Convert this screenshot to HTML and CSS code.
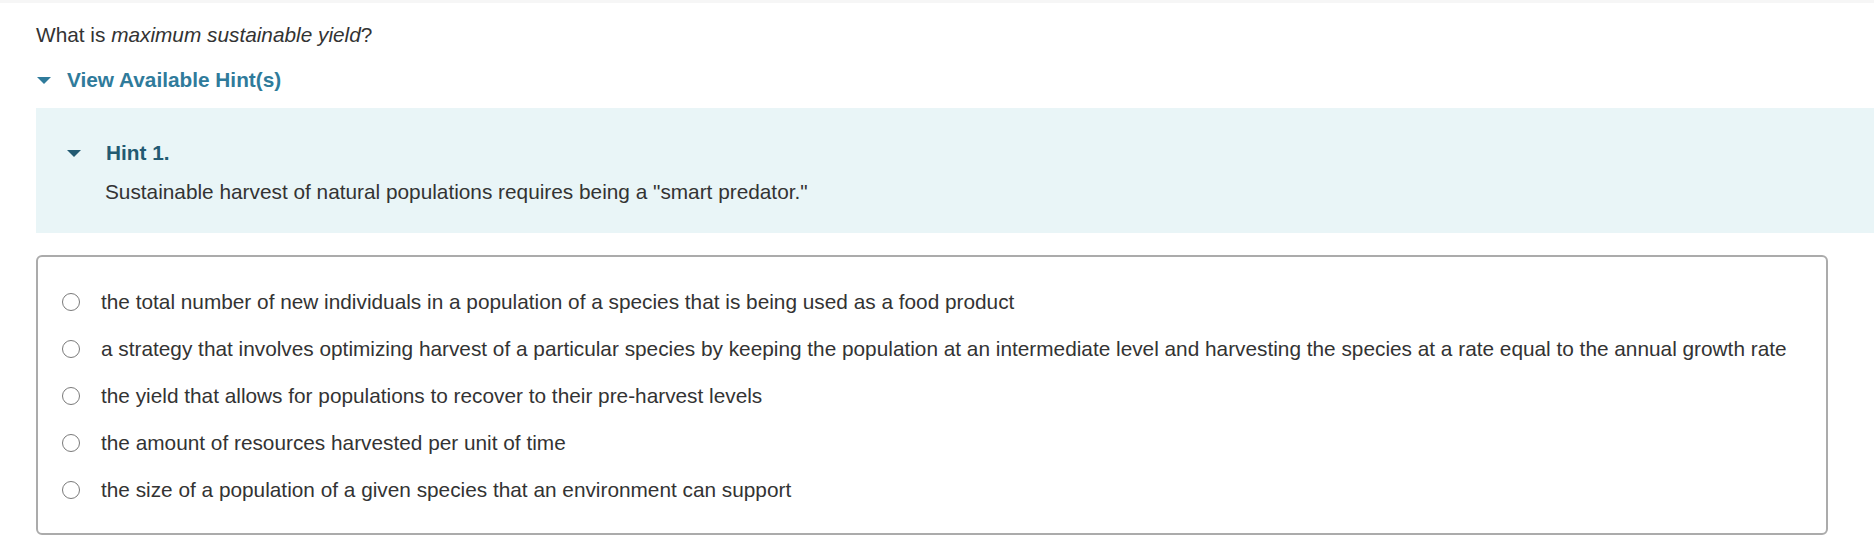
FILE: index.html
```html
<!DOCTYPE html>
<html>
<head>
  <title>Question</title>
  <link rel="stylesheet" href="styles.css">
</head>
<body>
  <div class="topbar"></div>
  <div class="problem">
    <p class="question">What is <em>maximum sustainable yield</em>?</p>

    <div class="hints-toggle">
      <span class="caret"></span>
      <span>View Available Hint(s)</span>
    </div>

    <div class="hint-panel">
      <div class="hint-head">
        <span class="caret dark"></span>
        <span>Hint 1.</span>
      </div>
      <p class="hint-body">Sustainable harvest of natural populations requires being a "smart predator."</p>
    </div>

    <div class="choices">
      <label class="choice"><span class="radio"></span>the total number of new individuals in a population of a species that is being used as a food product</label>
      <label class="choice"><span class="radio"></span>a strategy that involves optimizing harvest of a particular species by keeping the population at an intermediate level and harvesting the species at a rate equal to the annual growth rate</label>
      <label class="choice"><span class="radio"></span>the yield that allows for populations to recover to their pre-harvest levels</label>
      <label class="choice"><span class="radio"></span>the amount of resources harvested per unit of time</label>
      <label class="choice"><span class="radio"></span>the size of a population of a given species that an environment can support</label>
    </div>
  </div>
</body>
</html>
```

FILE: styles.css
```css
body {
  margin: 0;
  background: #fff;
  color: #333;
  font-family: "Liberation Sans", Arial, sans-serif;
  font-size: 20.8px;
}

.topbar {
  height: 3px;
  background: #f6f6f6;
}

.problem {
  padding: 20px 0 0 36px;
}

.question {
  margin: 0;
  line-height: 24px;
}

.hints-toggle {
  display: flex;
  align-items: center;
  gap: 16px;
  margin-top: 21px;
  line-height: 24px;
  font-weight: bold;
  color: #2f7b9b;
  padding-left: 1px;
}

.caret {
  width: 0;
  height: 0;
  border-left: 7.5px solid transparent;
  border-right: 7.5px solid transparent;
  border-top: 7px solid #2f7b9b;
}

.caret.dark {
  border-top-color: #225a72;
}

.hint-panel {
  margin-top: 16px;
  background: #e9f5f7;
  padding: 33px 0 29px 31px;
}

.hint-head {
  display: flex;
  align-items: center;
  gap: 25px;
  line-height: 24px;
  font-weight: bold;
  color: #225a72;
}

.hint-body {
  margin: 15px 0 0 38px;
  line-height: 24px;
}

.choices {
  margin: 22px 46px 0 0;
  border: 2px solid #ababab;
  border-radius: 6px;
  padding: 21px 0 20px 24px;
}

.choice {
  display: flex;
  align-items: center;
  gap: 21px;
  height: 47px;
}

.radio {
  flex: none;
  box-sizing: border-box;
  width: 18px;
  height: 18px;
  border: 1.5px solid #7a7a7a;
  border-radius: 50%;
}
```
